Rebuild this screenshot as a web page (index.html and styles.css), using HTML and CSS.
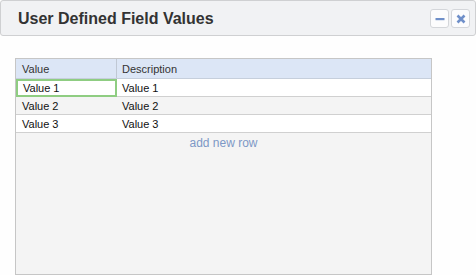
FILE: index.html
```html
<!DOCTYPE html>
<html>
<head>
<meta charset="utf-8">
<link rel="stylesheet" href="styles.css">
</head>
<body>
<div class="panel-header">
  <div class="title">User Defined Field Values</div>
  <div class="tools">
    <button class="tool" aria-label="Minimize">
      <svg width="10" height="10" viewBox="0 0 10 10"><rect x="0.5" y="4" width="9" height="2.2" fill="#6f8fc9"/></svg>
    </button>
    <button class="tool" aria-label="Close">
      <svg width="10" height="10" viewBox="0 0 10 10"><path d="M1.5 1.5 L8.5 8.5 M8.5 1.5 L1.5 8.5" stroke="#6f8fc9" stroke-width="2.6" stroke-linecap="butt"/></svg>
    </button>
  </div>
</div>
<div class="content">
  <div class="grid">
    <div class="row head">
      <div class="cell c1">Value</div>
      <div class="cell c2">Description</div>
    </div>
    <div class="row">
      <div class="cell c1 selected">Value 1</div>
      <div class="cell c2">Value 1</div>
    </div>
    <div class="row alt">
      <div class="cell c1">Value 2</div>
      <div class="cell c2">Value 2</div>
    </div>
    <div class="row">
      <div class="cell c1">Value 3</div>
      <div class="cell c2">Value 3</div>
    </div>
    <div class="add-row">add new row</div>
  </div>
</div>
</body>
</html>
```
FILE: styles.css
```css
html, body {
  margin: 0;
  padding: 0;
  background: #fefefe;
  font-family: "Liberation Sans", Arial, sans-serif;
}
.panel-header {
  height: 34px;
  border: 1px solid #cfd0d2;
  border-radius: 3px;
  background: #f1f2f4;
  display: flex;
  align-items: center;
  justify-content: space-between;
  padding: 0 5px 0 17px;
}
.title {
  font-size: 16px;
  font-weight: bold;
  color: #333;
  margin-top: 1px;
}
.tools {
  display: flex;
  gap: 2px;
  margin-top: 1px;
}
.tool {
  width: 19px;
  height: 19px;
  padding: 0;
  border: 1px solid #d4d6da;
  border-radius: 3px;
  background: #fcfcfd;
  display: flex;
  align-items: center;
  justify-content: center;
}
.content {
  padding: 22px 44px 0 15px;
}
.grid {
  height: 215px;
  border: 1px solid #c6c6c6;
  background: #f4f4f4;
  display: flex;
  flex-direction: column;
}
.row {
  display: flex;
  height: 17px;
  border-bottom: 1px solid #d0d0d0;
  background: #ffffff;
  font-size: 11px;
  color: #111;
}
.row.alt { background: #f4f4f4; }
.row.head {
  background: #dce6f6;
  color: #333;
  height: 19px;
  border-bottom: 1px solid #c6cfdc;
}
.cell {
  display: flex;
  align-items: center;
  padding-left: 6px;
  box-sizing: border-box;
}
.c1 {
  width: 101px;
  border-right: 1px solid transparent;
}
.row.head .c1 { border-right-color: #c0c8d4; }
.c2 { flex: 1; padding-left: 5px; }
.selected {
  border: 2px solid #8fcd82;
  padding-left: 5px;
  margin-bottom: -1px;
  height: 18px;
}
.add-row {
  text-align: center;
  font-size: 12px;
  color: #7d98c6;
  padding-top: 3px;
}
```
